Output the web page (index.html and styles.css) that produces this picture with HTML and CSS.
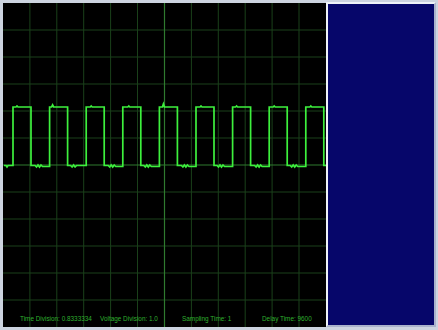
FILE: index.html
```html
<!DOCTYPE html>
<html>
<head>
<meta charset="utf-8">
<link rel="stylesheet" href="styles.css">
</head>
<body>
<div class="window">
  <div class="scope">
    <svg class="screen" width="323" height="324" viewBox="0 0 323 324">
      <defs>
        <filter id="glow" x="-5%" y="-5%" width="110%" height="110%">
          <feGaussianBlur stdDeviation="0.35"/>
        </filter>
      </defs>
      <g class="grid">
        <line x1="26.9" y1="0" x2="26.9" y2="324"/>
        <line x1="53.8" y1="0" x2="53.8" y2="324"/>
        <line x1="80.7" y1="0" x2="80.7" y2="324"/>
        <line x1="107.6" y1="0" x2="107.6" y2="324"/>
        <line x1="134.5" y1="0" x2="134.5" y2="324"/>
        <line x1="188.4" y1="0" x2="188.4" y2="324"/>
        <line x1="215.3" y1="0" x2="215.3" y2="324"/>
        <line x1="242.2" y1="0" x2="242.2" y2="324"/>
        <line x1="269.1" y1="0" x2="269.1" y2="324"/>
        <line x1="296" y1="0" x2="296" y2="324"/>
        <line x1="0" y1="27" x2="323" y2="27"/>
        <line x1="0" y1="54" x2="323" y2="54"/>
        <line x1="0" y1="81" x2="323" y2="81"/>
        <line x1="0" y1="108" x2="323" y2="108"/>
        <line x1="0" y1="135" x2="323" y2="135"/>
        <line x1="0" y1="189" x2="323" y2="189"/>
        <line x1="0" y1="216" x2="323" y2="216"/>
        <line x1="0" y1="243" x2="323" y2="243"/>
        <line x1="0" y1="270" x2="323" y2="270"/>
        <line x1="0" y1="297" x2="323" y2="297"/>
      </g>
      <g class="axis">
        <line x1="161.5" y1="0" x2="161.5" y2="324"/>
        <line x1="0" y1="162" x2="323" y2="162"/>
      </g>
      <path class="wave" filter="url(#glow)" d="M1,162.5 h2 l1,1.5 l1,-1.5 H10 V104 h3 l1,-1 l1,1 H28 V162.5 h4 l1.5,1.5 l1.5,-2 l1.5,2 l1.5,-2 l1.5,1.5 H46.6 V104 h2 l1,-2 l1,2 H64.6 V162.5 h3 l1.5,1.5 l1.5,-2 l1.5,2 l1.5,-1.5 H83.2 V104 h4 l1,-1 l1,1 H101.2 V162.5 h4 l1.5,1.5 l1.5,-2 l1.5,2 l1.5,-2 l1.5,1.5 H119.8 V104 h5 l1,-1 l1,1 H137.8 V162.5 h3 l1.5,1.5 l1.5,-2 l1.5,2 l1.5,-2 l1.5,1.5 H156.4 V104 h3 l1,-3 l1,3 H174.4 V162.5 h4 l1.5,1.5 l1.5,-2 l1.5,2 l1.5,-2 l1.5,1.5 H193 V104 h4 l1,-1 l1,1 H211 V162.5 h3 l1.5,1.5 l1.5,-2 l1.5,2 l1.5,-2 l1.5,1.5 H229.6 V104 h3 l1,-1 l1,1 H247.6 V162.5 h4 l1.5,1.5 l1.5,-2 l1.5,2 l1.5,-2 l1.5,1.5 H266.2 V104 h4 l1,-1 l1,1 H284.2 V162.5 h3 l1.5,1.5 l1.5,-2 l1.5,2 l1.5,-2 l1.5,1.5 H302.8 V104 h4 l1,-1 l1,1 H320.8 V162.5 H323"/>
      <g class="readout">
        <text x="17" y="318">Time Division: 0.8333334</text>
        <text x="97" y="318">Voltage Division: 1.0</text>
        <text x="179" y="318">Sampling Time: 1</text>
        <text x="259" y="318">Delay Time: 9600</text>
      </g>
    </svg>
  </div>
  <div class="panel"></div>
</div>
</body>
</html>
```
FILE: styles.css
```css
html, body {
  margin: 0;
  padding: 0;
}
body {
  width: 438px;
  height: 330px;
  background: #cdd4e0;
  overflow: hidden;
}
.window {
  display: flex;
  align-items: flex-start;
  padding: 2px 0 0 3px;
}
.scope {
  margin-top: 1px;
  width: 323px;
  height: 324px;
  background: #000;
}
.screen {
  display: block;
}
.grid line {
  stroke: #1a401a;
  stroke-width: 1;
}
.axis line {
  stroke: #2f7a2f;
  stroke-width: 1.2;
}
.wave {
  fill: none;
  stroke: #3cf03c;
  stroke-width: 1.7;
  stroke-linejoin: miter;
}
.readout text {
  font-family: "Liberation Sans", Arial, sans-serif;
  font-size: 6.4px;
  fill: #2fb02f;
}
.panel {
  width: 106px;
  height: 321px;
  background: #06066a;
  border-style: solid;
  border-width: 2px 2px 2px 2px;
  border-color: #eef2f8 #aab2cc #aab2cc #eef2f8;
}
```
